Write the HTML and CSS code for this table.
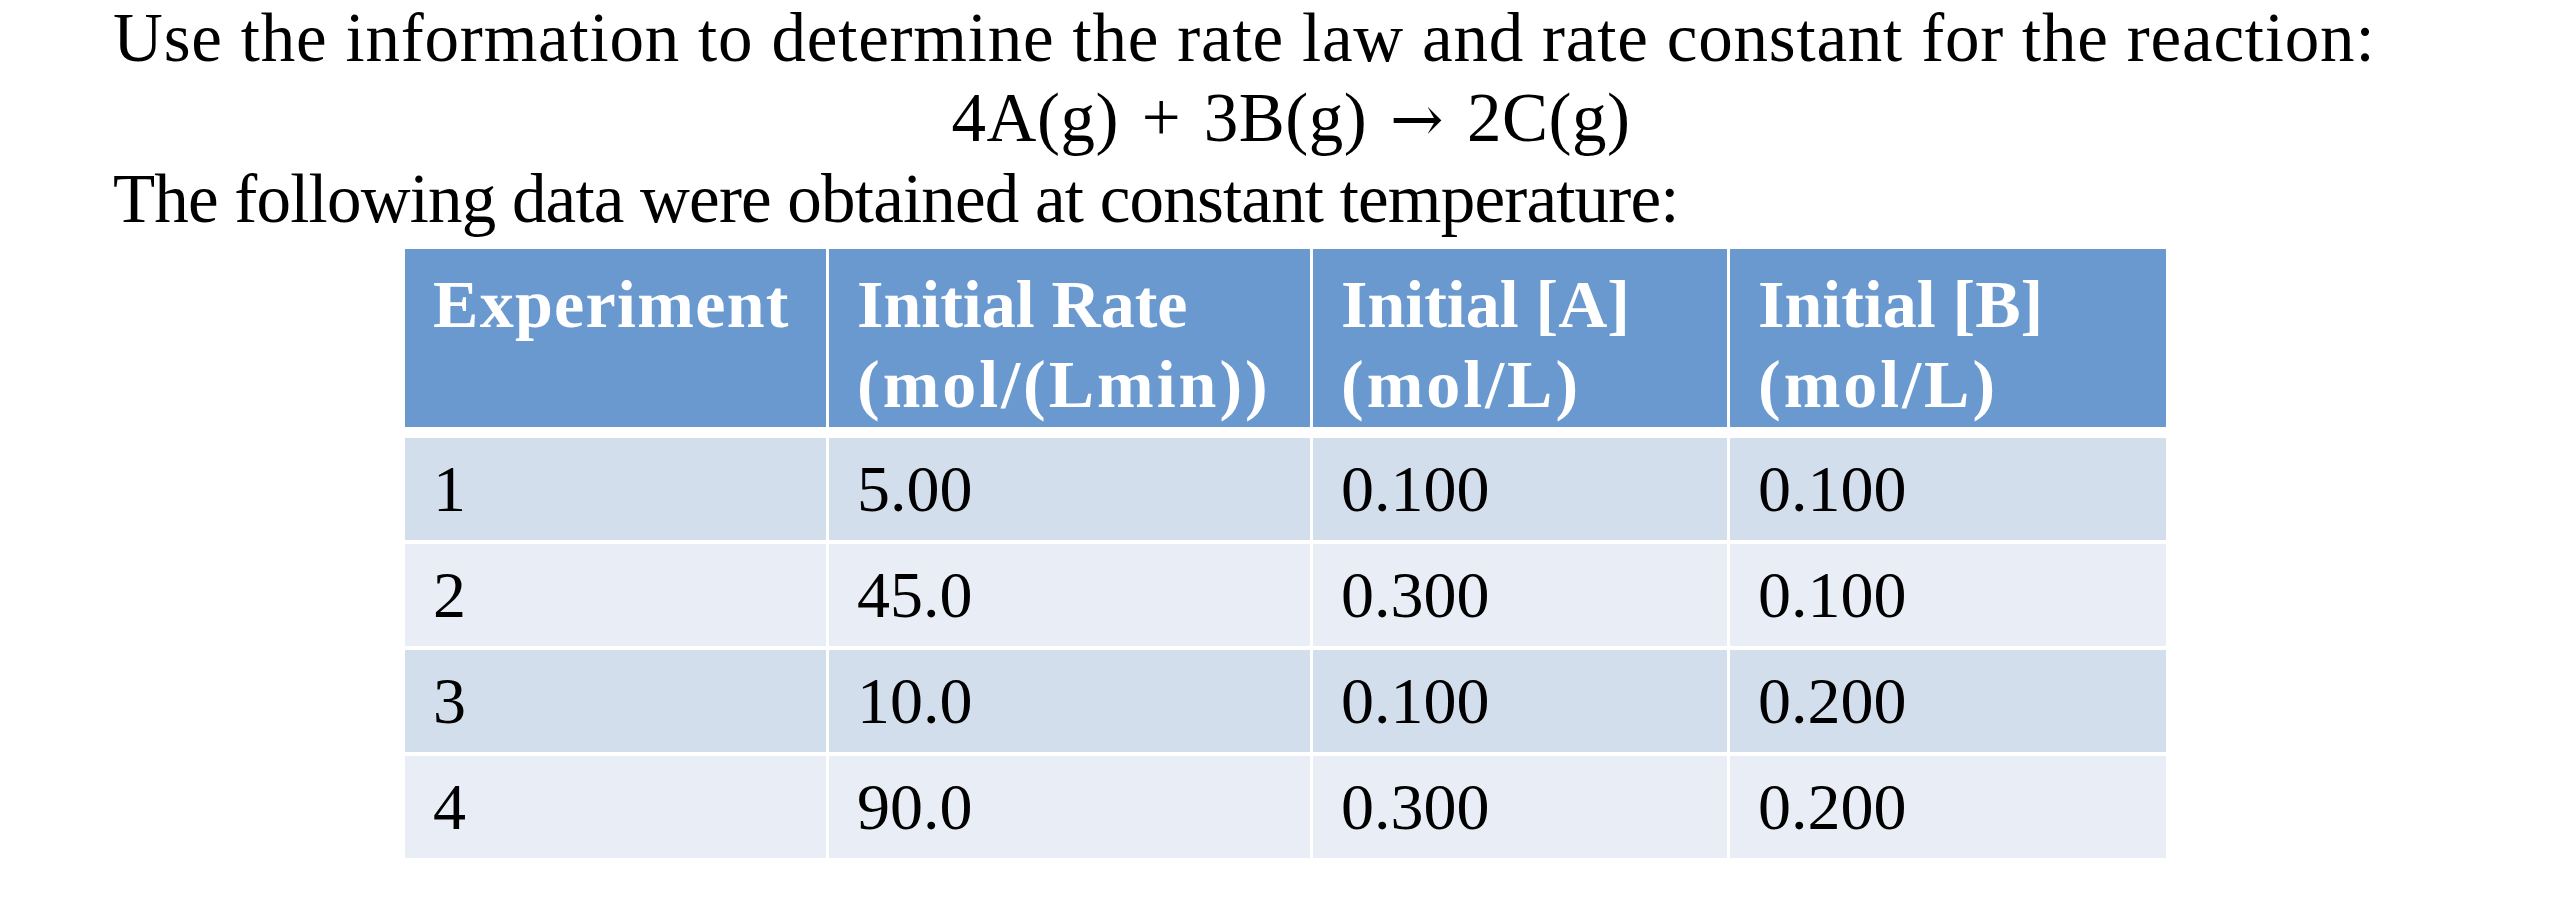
FILE: index.html
```html
<!DOCTYPE html>
<html lang="en">
<head>
<meta charset="utf-8">
<title>Rate law data</title>
<link rel="stylesheet" href="styles.css">
</head>
<body>
<main class="slide">
  <div class="prompt">
    <p class="line wide">Use the information to determine the rate law and rate constant for the reaction:</p>
    <p class="line eq">4A(g) + 3B(g) <span class="arrow">→</span> 2C(g)</p>
    <p class="line narrow">The following data were obtained at constant temperature:</p>
  </div>
  <div class="table">
    <div class="row head">
      <div class="cell">Experiment</div>
      <div class="cell">Initial Rate<br><span class="unit">(mol/(Lmin))</span></div>
      <div class="cell">Initial [A]<br><span class="unit">(mol/L)</span></div>
      <div class="cell">Initial [B]<br><span class="unit">(mol/L)</span></div>
    </div>
    <div class="row odd">
      <div class="cell">1</div><div class="cell">5.00</div><div class="cell">0.100</div><div class="cell">0.100</div>
    </div>
    <div class="row even">
      <div class="cell">2</div><div class="cell">45.0</div><div class="cell">0.300</div><div class="cell">0.100</div>
    </div>
    <div class="row odd">
      <div class="cell">3</div><div class="cell">10.0</div><div class="cell">0.100</div><div class="cell">0.200</div>
    </div>
    <div class="row even">
      <div class="cell">4</div><div class="cell">90.0</div><div class="cell">0.300</div><div class="cell">0.200</div>
    </div>
  </div>
</main>
</body>
</html>
```
FILE: styles.css
```css
html, body {
  margin: 0;
  padding: 0;
  background: #ffffff;
}
.slide {
  width: 2571px;
  height: 911px;
  box-sizing: border-box;
  padding: 0 0 0 113px;
  font-family: "Liberation Serif", "Times New Roman", serif;
  color: #000000;
  overflow: hidden;
}
.prompt {
  width: 2356px;
  margin-top: -2px;
}
.line {
  margin: 0;
  font-size: 69px;
  line-height: 80px;
  white-space: nowrap;
}
.line.wide {
  letter-spacing: 0.8px;
}
.line.narrow {
  letter-spacing: -0.8px;
}
.eq {
  text-align: center;
  letter-spacing: 0.5px;
  word-spacing: 5px;
}
.arrow {
  font-family: "DejaVu Serif", serif;
  font-size: 64px;
}
.table {
  margin: 10px 0 0 292px;
  display: flex;
  flex-direction: column;
  gap: 4px;
  width: 1761px;
}
.row {
  display: grid;
  grid-template-columns: 421px 481px 414px 436px;
  column-gap: 3px;
}
.row.head {
  margin-bottom: 7px;
}
.cell {
  box-sizing: border-box;
  padding-left: 28px;
  white-space: nowrap;
}
.head .cell {
  background: #6a99cf;
  color: #ffffff;
  font-weight: bold;
  font-size: 68px;
  line-height: 80px;
  height: 178px;
  padding-top: 15px;
}
.head .cell:first-child {
  letter-spacing: 1.3px;
}
.unit {
  letter-spacing: 3px;
}
.odd .cell,
.even .cell {
  font-size: 66px;
  line-height: 80px;
  height: 102px;
  padding-top: 11px;
}
.odd .cell {
  background: #d3deec;
}
.even .cell {
  background: #e9eef6;
}
```
